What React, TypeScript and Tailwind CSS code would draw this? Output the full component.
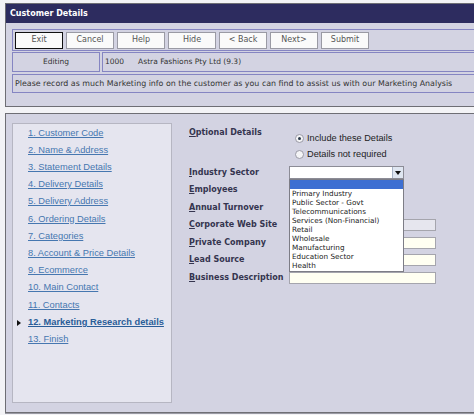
import React from 'react';

const verdana = "font-['DejaVu_Sans',Verdana,sans-serif]";
const arial = "font-['Liberation_Sans',Arial,sans-serif]";

const buttons = ['Exit', 'Cancel', 'Help', 'Hide', '< Back', 'Next>', 'Submit'];

const steps = [
  '1. Customer Code',
  '2. Name & Address',
  '3. Statement Details',
  '4. Delivery Details',
  '5. Delivery Address',
  '6. Ordering Details',
  '7. Categories',
  '8. Account & Price Details',
  '9. Ecommerce',
  '10. Main Contact',
  '11. Contacts',
  '12. Marketing Research details',
  '13. Finish',
];

const sectors = [
  'Primary Industry',
  'Public Sector - Govt',
  'Telecommunications',
  'Services (Non-Financial)',
  'Retail',
  'Wholesale',
  'Manufacturing',
  'Education Sector',
  'Health',
];

function Label({ text }: { text: string }) {
  return (
    <span className={`${verdana} block text-[8px] leading-[10px] font-bold text-[#35354f] w-[100px] shrink-0 pt-[2px]`}>
      <span className="underline">{text[0]}</span>
      {text.slice(1)}
    </span>
  );
}

function Radio({ checked, label }: { checked?: boolean; label: string }) {
  return (
    <div className="h-[16px] flex items-center">
      <span className="w-[9px] h-[9px] rounded-full border border-[#9a9aa6] bg-[#f4f4f6] flex items-center justify-center mr-[3px]">
        {checked && <span className="w-[3px] h-[3px] rounded-full bg-[#2a3a4a]" />}
      </span>
      <span className={`${arial} text-[9.2px] leading-[10px] text-[#222]`}>{label}</span>
    </div>
  );
}

function Row({ label, children }: { label: string; children?: React.ReactNode }) {
  return (
    <div className="h-[17.5px] flex items-center relative">
      <Label text={label} />
      {children}
    </div>
  );
}

export default function App() {
  return (
    <div className="w-[474px] h-[415px] overflow-hidden bg-[#f3f3f6] pt-[3px] pl-[5px]">
      {/* top panel */}
      <div className="w-[480px] h-[104px] border border-[#6e6e74] bg-[#d3d3e2] flex flex-col">
        <div className={`${verdana} h-[19px] bg-[#2d2c5f] text-white font-bold text-[8px] pl-[4px] flex items-center`}>
          Customer Details
        </div>
        <div className="pl-[6px] pt-[6px] flex flex-col">
          <div className="h-[22px] border border-[#8585c2] flex items-center gap-[3px] pl-[2px]">
            {buttons.map((b, i) => (
              <div
                key={b}
                className={`${verdana} w-[48px] h-[17px] flex items-center justify-center text-[8px] text-[#555] bg-[#fafafa] border ${
                  i === 0 ? 'border-[#111] border-[1.5px]' : 'border-[#9a9aa4]'
                }`}
              >
                {b}
              </div>
            ))}
          </div>
          <div className="h-[20px] mt-[1px] flex gap-[2px]">
            <div className={`${verdana} w-[88px] border border-[#8585c2] flex items-center justify-center text-[7.5px] text-[#333]`}>
              Editing
            </div>
            <div className={`${verdana} flex-1 border border-[#8585c2] flex items-center pl-[2px] text-[7.5px] text-[#333]`}>
              <span className="mr-[14px]">1000</span>Astra Fashions Pty Ltd (9.3)
            </div>
          </div>
          <div className={`${verdana} h-[19px] mt-[2px] border border-[#8585c2] flex items-center pl-[2px] text-[7.9px] text-[#333]`}>
            Please record as much Marketing info on the customer as you can find to assist us with our Marketing Analysis
          </div>
        </div>
      </div>

      {/* lower panel */}
      <div className="w-[480px] h-[300px] mt-[6px] border border-[#6e6e74] shadow-[0_1px_0_#9a9aa4] bg-[#d3d3e2] flex">
        <div className="w-[160px] ml-[6px] my-[9px] pt-[1px] bg-[#e5e5ef] border border-[#b6b6c2] flex flex-col">
          {steps.map((s, i) => {
            const active = i === 11;
            return (
              <div key={s} className="h-[17.2px] flex items-center">
                <span className="w-[15px] pl-[4px] flex items-center">
                  {active && (
                    <svg width="4" height="6" viewBox="0 0 4 6">
                      <path d="M0 0 L4 3 L0 6 Z" fill="#111" />
                    </svg>
                  )}
                </span>
                <span
                  className={`${arial} text-[9.3px] underline ${
                    active ? 'font-bold text-[#2a5d98]' : 'text-[#4677b0]'
                  }`}
                >
                  {s}
                </span>
              </div>
            );
          })}
        </div>

        <div className="ml-[17px] flex flex-col">
          <div className="h-[49px] flex">
            <div className="pt-[12px]">
              <Label text="Optional Details" />
            </div>
            <div className="pt-[16px] pl-[6px]">
              <Radio checked label="Include these Details" />
              <Radio label="Details not required" />
            </div>
          </div>
          <Row label="Industry Sector">
            <div className="relative mt-[2px] z-10">
              <div className="w-[115px] h-[13px] border border-[#8c8c96] bg-white flex justify-end">
                <div className="w-[11px] h-[11px] bg-[#dfe6f1] border-l border-[#a8b4c8] flex items-center justify-center">
                  <svg width="6" height="4" viewBox="0 0 6 4">
                    <path d="M0 0 H6 L3 4 Z" fill="#111" />
                  </svg>
                </div>
              </div>
              <div className={`${verdana} absolute left-0 top-[13px] w-[115px] border border-[#7d7d86] bg-white text-[7.25px] text-[#222] leading-[9px] pb-[1px]`}>
                <div className="h-[9px] bg-[#3d6fd2]" />
                {sectors.map((s) => (
                  <div key={s} className="pl-[2px] h-[9px]">
                    {s}
                  </div>
                ))}
              </div>
            </div>
          </Row>
          <Row label="Employees">
            <div className="w-[100px] h-[12px] border border-[#a5a5ad] bg-[#fffff2] mt-[2px]" />
          </Row>
          <Row label="Annual Turnover">
            <div className="w-[100px] h-[12px] border border-[#a5a5ad] bg-[#fffff2] mt-[2px]" />
          </Row>
          <Row label="Corporate Web Site">
            <div className="w-[147px] h-[12px] border border-[#a5a5ad] bg-[#e6e6ee] mt-[2px]" />
          </Row>
          <Row label="Private Company">
            <div className="w-[147px] h-[12px] border border-[#a5a5ad] bg-[#fffff2] mt-[2px]" />
          </Row>
          <Row label="Lead Source">
            <div className="w-[147px] h-[12px] border border-[#a5a5ad] bg-[#fffff2] mt-[2px]" />
          </Row>
          <Row label="Business Description">
            <div className="w-[147px] h-[12px] border border-[#a5a5ad] bg-[#fffff2] mt-[2px]" />
          </Row>
        </div>
      </div>
    </div>
  );
}
